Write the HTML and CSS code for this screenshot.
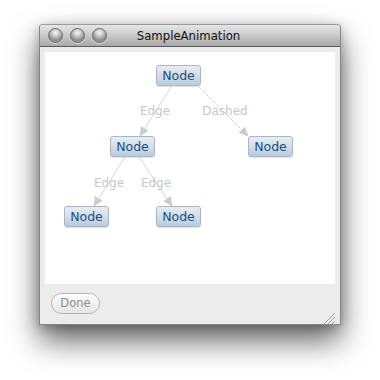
FILE: index.html
```html
<!DOCTYPE html>
<html>
<head>
<meta charset="utf-8">
<link rel="stylesheet" href="styles.css">
</head>
<body>
<div class="window">
  <div class="titlebar">
    <div class="lights">
      <span class="light"></span>
      <span class="light"></span>
      <span class="light"></span>
    </div>
    <div class="title">SampleAnimation</div>
  </div>
  <div class="body">
    <div class="canvas">
      <svg class="edges" width="290" height="232" viewBox="0 0 290 232">
        <defs>
          <marker id="arrow" markerWidth="10" markerHeight="10" refX="9" refY="5" orient="auto" markerUnits="userSpaceOnUse">
            <path d="M0,0.5 L10,5 L0,9.5 Z" fill="#cccccc"/>
          </marker>
        </defs>
        <line class="edge" x1="126" y1="35" x2="95" y2="84" marker-end="url(#arrow)"/>
        <line class="edge dashed" x1="154" y1="35" x2="203" y2="84" marker-end="url(#arrow)"/>
        <line class="edge" x1="80" y1="105" x2="49" y2="154" marker-end="url(#arrow)"/>
        <line class="edge" x1="94" y1="105" x2="127" y2="154" marker-end="url(#arrow)"/>
      </svg>
      <div class="label" style="left:110px;top:59px">Edge</div>
      <div class="label" style="left:180px;top:59px">Dashed</div>
      <div class="label" style="left:64px;top:131px">Edge</div>
      <div class="label" style="left:111px;top:131px">Edge</div>
      <div class="node" style="left:111px;top:13px">Node</div>
      <div class="node" style="left:65px;top:84px">Node</div>
      <div class="node" style="left:203px;top:84px">Node</div>
      <div class="node" style="left:19px;top:154px">Node</div>
      <div class="node" style="left:111px;top:154px">Node</div>
    </div>
    <div class="footer">
      <button class="done">Done</button>
      <svg class="grip" width="12" height="12" viewBox="0 0 12 12">
        <line x1="1" y1="12" x2="12" y2="1" stroke="#9a9a9a" stroke-width="1"/>
        <line x1="5" y1="12" x2="12" y2="5" stroke="#9a9a9a" stroke-width="1"/>
        <line x1="9" y1="12" x2="12" y2="9" stroke="#9a9a9a" stroke-width="1"/>
        <line x1="2" y1="12" x2="12" y2="2" stroke="#ffffff" stroke-width="0.6"/>
        <line x1="6" y1="12" x2="12" y2="6" stroke="#ffffff" stroke-width="0.6"/>
      </svg>
    </div>
  </div>
</div>
</body>
</html>
```

FILE: styles.css
```css
html, body {
  margin: 0;
  padding: 0;
  background: #ffffff;
  width: 380px;
  height: 380px;
  overflow: hidden;
}

.window {
  margin: 24px 0 0 39px;
  width: 300px;
  height: 299px;
  border: 1px solid #858585;
  border-top-color: #9a9a9a;
  border-radius: 4px 4px 0 0;
  background: #ececec;
  box-shadow: 0 16px 30px rgba(0, 0, 0, 0.6), 0 2px 12px rgba(0, 0, 0, 0.25);
  display: flex;
  flex-direction: column;
  font-family: "DejaVu Sans", "Liberation Sans", sans-serif;
}

.titlebar {
  position: relative;
  height: 21px;
  border-bottom: 1px solid #5a5a5a;
  border-radius: 3px 3px 0 0;
  background: linear-gradient(to bottom, #e6e6e6 0%, #cfcfcf 40%, #a9a9a9 100%);
  display: flex;
  align-items: center;
}

.lights {
  display: flex;
  gap: 7px;
  padding-left: 8px;
  position: relative;
  z-index: 1;
}

.light {
  width: 13px;
  height: 13px;
  border-radius: 50%;
  border: 1px solid #6a6a6a;
  background: radial-gradient(circle at 50% 28%, #f6f6f6 0%, #cdcdcd 30%, #8a8a8a 68%, #c0c0c0 100%);
  box-shadow: 0 1px 0 rgba(255, 255, 255, 0.5);
}

.title {
  position: absolute;
  left: 0;
  right: 3px;
  top: 0;
  line-height: 21px;
  text-align: center;
  font-family: "DejaVu Sans Condensed", "DejaVu Sans", sans-serif;
  font-stretch: condensed;
  font-size: 13px;
  color: #111111;
}

.body {
  flex: 1;
  display: flex;
  flex-direction: column;
  padding: 5px 5px 0 5px;
}

.canvas {
  position: relative;
  height: 232px;
  background: #ffffff;
}

.edges {
  position: absolute;
  left: 0;
  top: 0;
}

.edge {
  stroke: #d6d6d6;
  stroke-width: 1;
}

.edge.dashed {
  stroke-dasharray: 3 2;
  stroke: #cccccc;
}

.label {
  position: absolute;
  transform: translate(-50%, -50%);
  font-size: 12px;
  color: #c8c8c8;
  white-space: nowrap;
  line-height: 14px;
}

.node {
  position: absolute;
  width: 43px;
  height: 19px;
  border: 1px solid #a9b6c6;
  border-radius: 3px;
  background: linear-gradient(to bottom, #e6edf5 0%, #d3dde9 50%, #bccadb 100%);
  box-shadow: 0 1px 1px rgba(0, 0, 0, 0.12);
  color: #1b4f7e;
  font-size: 12.5px;
  line-height: 19px;
  text-align: center;
}

.footer {
  flex: 1;
  position: relative;
  display: flex;
  align-items: flex-start;
  padding: 9px 0 0 6px;
}

.done {
  width: 49px;
  height: 21px;
  padding: 0;
  border: 1px solid #b3b3b3;
  border-radius: 11px;
  background: linear-gradient(to bottom, #fdfdfd 0%, #f1f1f1 50%, #e6e6e6 100%);
  box-shadow: inset 0 1px 0 #ffffff;
  color: #8c8c8c;
  font-family: "DejaVu Sans", "Liberation Sans", sans-serif;
  font-size: 11.5px;
  line-height: 19px;
}

.grip {
  position: absolute;
  right: 0;
  bottom: 0;
}
```
